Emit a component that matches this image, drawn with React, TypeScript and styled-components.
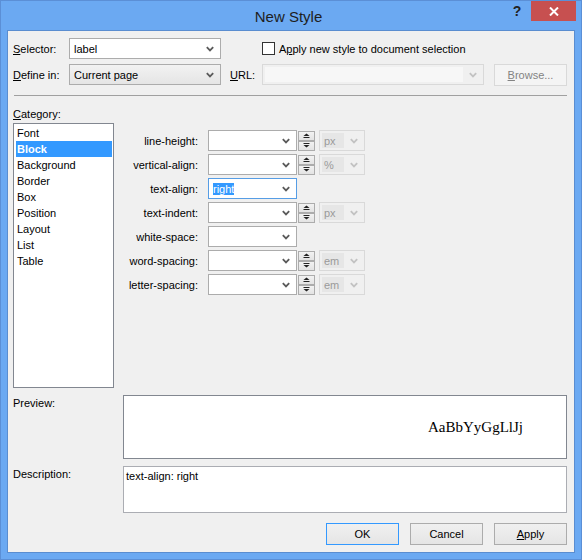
import React from "react";
import styled, { createGlobalStyle } from "styled-components";

const GlobalStyle = createGlobalStyle`
  html, body {
    margin: 0;
    padding: 0;
  }
  body {
    font-family: "Liberation Sans", Arial, sans-serif;
    font-size: 11px;
    color: #000;
    background: #fff;
  }
  * {
    box-sizing: border-box;
  }
`;

const Window = styled.div`
  width: 582px;
  height: 560px;
  background: #6ba9f2;
  border: 1px solid #5b8fd6;
  padding: 0 6px 6px;
  display: flex;
  flex-direction: column;
`;

const TitleBar = styled.div`
  height: 29px;
  margin: 0 -6px;
  padding-right: 5px;
  display: grid;
  grid-template-columns: 1fr auto 1fr;
`;

const Title = styled.div`
  grid-column: 2;
  align-self: center;
  font-size: 15px;
  color: #1e1e1e;
  padding-top: 1px;
`;

const Controls = styled.div`
  grid-column: 3;
  justify-self: end;
  display: flex;
  align-items: flex-start;
`;

const HelpButton = styled.div`
  width: 28px;
  height: 20px;
  display: flex;
  align-items: center;
  justify-content: center;
  font-weight: bold;
  font-size: 14px;
  color: #222;
`;

const CloseButton = styled.div`
  width: 45px;
  height: 20px;
  background: #c75050;
  display: flex;
  align-items: center;
  justify-content: center;
`;

const Client = styled.div`
  flex: 1;
  background: #f0f0f0;
  border: 1px solid #5a8dd0;
  padding: 7px 7px 6px 5px;
  display: flex;
  flex-direction: column;
`;

const Row = styled.div<{ $gap?: number }>`
  display: flex;
  align-items: center;
  height: 21px;
  margin-top: ${(p) => p.$gap ?? 0}px;
`;

const FieldLabel = styled.label<{ $width: number; $indent?: number }>`
  width: ${(p) => p.$width}px;
  margin-left: ${(p) => p.$indent ?? 0}px;
  flex: none;
`;

const Key = styled.u`
  text-decoration: underline;
`;

const ComboBox = styled.div<{ $width: number; $flat?: boolean; $focused?: boolean }>`
  width: ${(p) => p.$width}px;
  height: 21px;
  flex: none;
  border: 1px solid ${(p) => (p.$focused ? "#569de5" : "#acacac")};
  background: ${(p) => (p.$flat ? "#fff" : "linear-gradient(#f2f2f2, #e5e5e5)")};
  display: flex;
  align-items: center;
  padding: 0 6px 0 4px;
`;

const ComboText = styled.span`
  flex: 1;
  white-space: nowrap;
  overflow: hidden;
`;

const Selected = styled.span`
  background: #3399ff;
  color: #fff;
  padding: 1px 0;
`;

const DisabledCombo = styled.div<{ $width: number; $indent?: number }>`
  width: ${(p) => p.$width}px;
  height: 21px;
  flex: none;
  margin-left: ${(p) => p.$indent ?? 0}px;
  border: 1px solid #d9d9d9;
  display: flex;
  align-items: center;
  padding: 2px 6px 2px 2px;
  color: #9a9a9a;
`;

const DisabledFill = styled.div<{ $tone: string }>`
  flex: 1;
  align-self: stretch;
  background: ${(p) => p.$tone};
  margin-right: 6px;
  display: flex;
  align-items: center;
  padding-left: 2px;
`;

const CheckLabel = styled.label<{ $indent: number }>`
  display: flex;
  align-items: center;
  margin-left: ${(p) => p.$indent}px;
  gap: 4px;
`;

const CheckBox = styled.span`
  width: 13px;
  height: 13px;
  border: 1px solid #333;
  background: #fff;
`;

const PushButton = styled.div<{ $width: number; $indent?: number; $disabled?: boolean; $default?: boolean }>`
  width: ${(p) => p.$width}px;
  height: 22px;
  flex: none;
  margin-left: ${(p) => p.$indent ?? 0}px;
  border: 1px solid
    ${(p) => (p.$default ? "#3399ff" : p.$disabled ? "#d9d9d9" : "#acacac")};
  background: ${(p) => (p.$disabled ? "#f4f4f4" : "linear-gradient(#f0f0f0, #e5e5e5)")};
  color: ${(p) => (p.$disabled ? "#838383" : "#000")};
  display: flex;
  align-items: center;
  justify-content: center;
`;

const Separator = styled.div`
  height: 1px;
  background: #a0a0a0;
  margin: 10px 0 0 1px;
`;

const SectionLabel = styled.div`
  margin-top: 12px;
  line-height: 13px;
`;

const Main = styled.div`
  display: flex;
  margin-top: 2px;
`;

const ListBox = styled.ul`
  width: 101px;
  height: 265px;
  margin: 0;
  padding: 1px 1px 1px 2px;
  list-style: none;
  background: #fff;
  border: 1px solid #828790;
`;

const ListItem = styled.li<{ $selected?: boolean }>`
  height: 16px;
  line-height: 16px;
  padding-left: 1px;
  background: ${(p) => (p.$selected ? "#3399ff" : "transparent")};
  color: ${(p) => (p.$selected ? "#fff" : "#000")};
  font-weight: ${(p) => (p.$selected ? "bold" : "normal")};
`;

const PropPanel = styled.div`
  display: flex;
  flex-direction: column;
  gap: 3px;
  padding-top: 7px;
`;

const PropLabel = styled.label`
  width: 84px;
  margin-right: 10px;
  text-align: right;
  flex: none;
`;

const Spinner = styled.div`
  width: 17px;
  height: 20px;
  margin-left: 1px;
  display: flex;
  flex-direction: column;
  justify-content: space-between;
`;

const SpinButton = styled.div`
  height: 10px;
  border: 1px solid #acacac;
  background: linear-gradient(#f2f2f2, #e3e3e3);
  display: flex;
  align-items: center;
  justify-content: center;
`;

const BoxRow = styled.div`
  display: flex;
  margin-top: 7px;
`;

const BoxLabel = styled.div`
  width: 110px;
  flex: none;
  padding-top: 2px;
`;

const PreviewBox = styled.div`
  flex: 1;
  height: 64px;
  background: #fff;
  border: 1px solid #828790;
  display: flex;
  align-items: center;
  justify-content: flex-end;
  padding: 0 43px 0 0;
  font-family: "Liberation Serif", "Times New Roman", serif;
  font-size: 15px;
`;

const DescriptionBox = styled.div`
  flex: 1;
  height: 47px;
  background: #fff;
  border: 1px solid #abadb3;
  padding: 3px 2px;
`;

const ButtonBar = styled.div`
  display: flex;
  justify-content: flex-end;
  margin-top: 10px;
`;

const Chevron: React.FC<{ color?: string }> = ({ color = "#5a5a5a" }) => (
  <svg width="8" height="6" viewBox="0 0 8 6">
    <path d="M0.8 1.2 L4 4.4 L7.2 1.2" fill="none" stroke={color} strokeWidth="1.8" />
  </svg>
);

const CloseGlyph: React.FC = () => (
  <svg width="10" height="9" viewBox="0 0 10 9">
    <path d="M1 0.5 L9 8.5 M9 0.5 L1 8.5" stroke="#fff" strokeWidth="2" />
  </svg>
);

const SpinGlyph: React.FC<{ up?: boolean }> = ({ up }) => (
  <svg width="7" height="5" viewBox="0 0 7 5">
    {up ? (
      <>
        <path d="M3.5 0.5 L6.5 3 L0.5 3 Z" fill="#222" />
        <rect x="0.5" y="4" width="6" height="1" fill="#222" />
      </>
    ) : (
      <>
        <rect x="0.5" y="0" width="6" height="1" fill="#222" />
        <path d="M0.5 2 L6.5 2 L3.5 4.5 Z" fill="#222" />
      </>
    )}
  </svg>
);

interface Prop {
  label: string;
  value?: string;
  unit?: string;
  focused?: boolean;
}

const props: Prop[] = [
  { label: "line-height:", unit: "px" },
  { label: "vertical-align:", unit: "%" },
  { label: "text-align:", value: "right", focused: true },
  { label: "text-indent:", unit: "px" },
  { label: "white-space:" },
  { label: "word-spacing:", unit: "em" },
  { label: "letter-spacing:", unit: "em" },
];

const categories = ["Font", "Block", "Background", "Border", "Box", "Position", "Layout", "List", "Table"];

const App: React.FC = () => {
  return (
    <>
      <GlobalStyle />
      <Window>
        <TitleBar>
          <Title>New Style</Title>
          <Controls>
            <HelpButton>?</HelpButton>
            <CloseButton>
              <CloseGlyph />
            </CloseButton>
          </Controls>
        </TitleBar>

        <Client>
          <Row>
            <FieldLabel $width={56}>
              <Key>S</Key>elector:
            </FieldLabel>
            <ComboBox $width={152} $flat>
              <ComboText>label</ComboText>
              <Chevron />
            </ComboBox>
            <CheckLabel $indent={41}>
              <CheckBox />
              <span>
                A<Key>p</Key>ply new style to document selection
              </span>
            </CheckLabel>
          </Row>

          <Row $gap={5}>
            <FieldLabel $width={56}>
              <Key>D</Key>efine in:
            </FieldLabel>
            <ComboBox $width={152}>
              <ComboText>Current page</ComboText>
              <Chevron />
            </ComboBox>
            <FieldLabel $width={32} $indent={9}>
              <Key>U</Key>RL:
            </FieldLabel>
            <DisabledCombo $width={222}>
              <DisabledFill $tone="#f7f7f7" />
              <Chevron color="#c2c2c2" />
            </DisabledCombo>
            <PushButton $width={73} $indent={10} $disabled>
              <span>
                <Key>B</Key>rowse...
              </span>
            </PushButton>
          </Row>

          <Separator />

          <SectionLabel>
            <Key>C</Key>ategory:
          </SectionLabel>

          <Main>
            <ListBox>
              {categories.map((c) => (
                <ListItem key={c} $selected={c === "Block"}>
                  {c}
                </ListItem>
              ))}
            </ListBox>

            <PropPanel>
              {props.map((p) => (
                <Row key={p.label}>
                  <PropLabel>{p.label}</PropLabel>
                  <ComboBox $width={89} $flat $focused={p.focused}>
                    <ComboText>{p.value && <Selected>{p.value}</Selected>}</ComboText>
                    <Chevron />
                  </ComboBox>
                  {p.unit && (
                    <>
                      <Spinner>
                        <SpinButton>
                          <SpinGlyph up />
                        </SpinButton>
                        <SpinButton>
                          <SpinGlyph />
                        </SpinButton>
                      </Spinner>
                      <DisabledCombo $width={46} $indent={4}>
                        <DisabledFill $tone="#e6e6e6">{p.unit}</DisabledFill>
                        <Chevron color="#c2c2c2" />
                      </DisabledCombo>
                    </>
                  )}
                </Row>
              ))}
            </PropPanel>
          </Main>

          <BoxRow>
            <BoxLabel>Preview:</BoxLabel>
            <PreviewBox>AaBbYyGgLlJj</PreviewBox>
          </BoxRow>

          <BoxRow>
            <BoxLabel>Description:</BoxLabel>
            <DescriptionBox>text-align: right</DescriptionBox>
          </BoxRow>

          <ButtonBar>
            <PushButton $width={73} $default>
              OK
            </PushButton>
            <PushButton $width={73} $indent={11}>
              Cancel
            </PushButton>
            <PushButton $width={73} $indent={11}>
              <span>
                <Key>A</Key>pply
              </span>
            </PushButton>
          </ButtonBar>
        </Client>
      </Window>
    </>
  );
};

export default App;
